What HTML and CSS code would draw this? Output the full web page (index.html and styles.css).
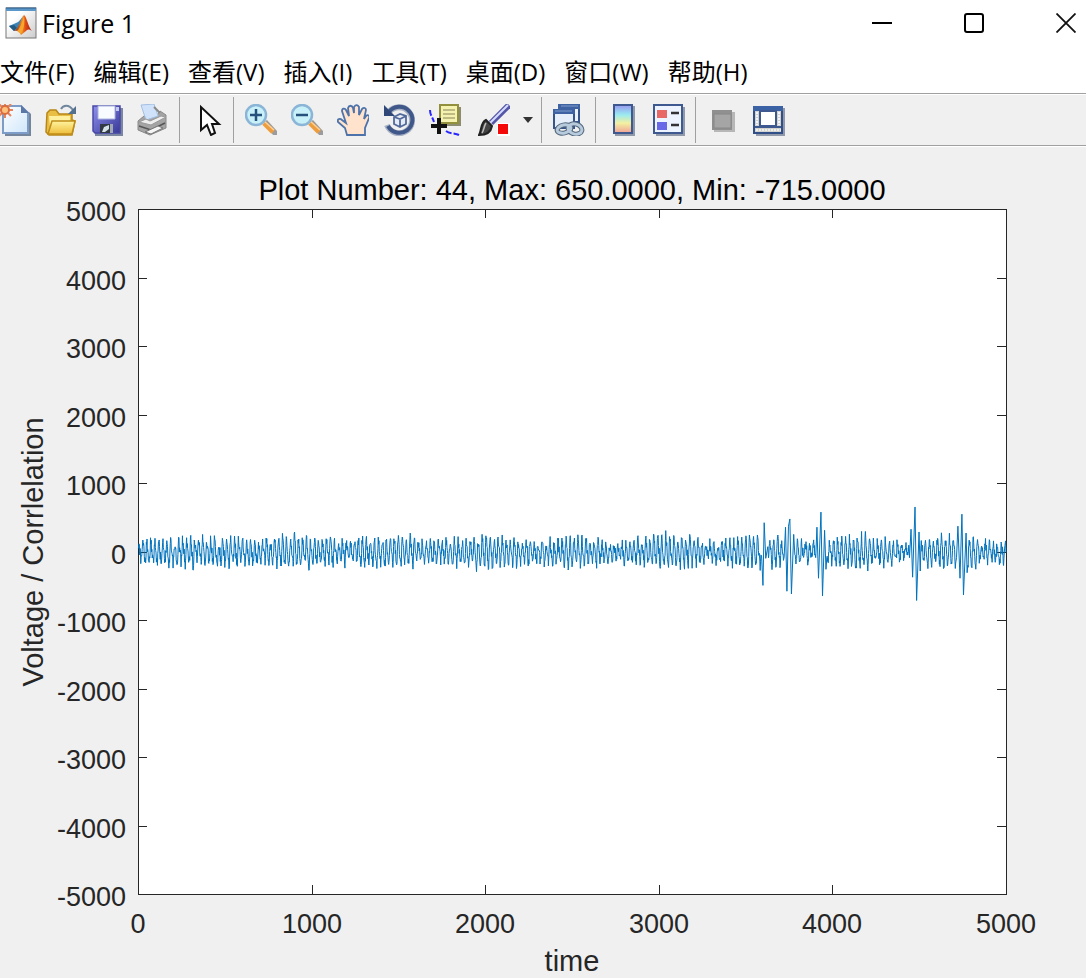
FILE: index.html
```html
<!DOCTYPE html>
<html lang="zh-CN">
<head>
<meta charset="UTF-8">
<meta name="viewport" content="width=device-width, initial-scale=1.0">
<title>Figure 1</title>
<link rel="stylesheet" href="styles.css">
</head>
<body>
<header class="titlebar">
<svg class="app-icon" viewBox="0 0 32 32" aria-hidden="true">
<defs>
<linearGradient id="appBg" x1="0" y1="0" x2="1" y2="1"><stop offset="0.3" stop-color="#ffffff"/><stop offset="1" stop-color="#cccccc"/></linearGradient>
<linearGradient id="flame" x1="0" y1="0" x2="1" y2="0"><stop offset="0" stop-color="#7c1c14"/><stop offset="0.45" stop-color="#f08a24"/><stop offset="0.65" stop-color="#e04a12"/><stop offset="1" stop-color="#a01c10"/></linearGradient>
</defs>
<rect x="1" y="1" width="30" height="30" fill="url(#appBg)" stroke="#777"/>
<path d="M1 1h30v3H1z" fill="#5a96c8"/><path d="M1 1h30" stroke="#2d5f8c"/>
<path d="M4 19l7-3c3-1 5-4 7-7l-3 10-6 5z" fill="#3b83b5"/>
<path d="M4 19l5 5 3-3-3-3z" fill="#245a80"/>
<path d="M9 24c5-2 7-13 10-16 3 2 4 12 8 16-3-2-4-2-6 0l-5 4c-1-3-3-5-7-4z" fill="url(#flame)"/>
<path d="M19 9c-2 5-3 12-7 15l4 3c3-5 4-12 3-18z" fill="#f6a52e"/>
</svg>
<h1>Figure 1</h1>
<div class="window-buttons">
<button aria-label="最小化"><svg viewBox="0 0 20 20"><path d="M0 10h20" stroke="#000" stroke-width="2"/></svg></button>
<button aria-label="最大化"><svg viewBox="0 0 20 20"><rect x="1" y="1" width="18" height="18" rx="2" fill="none" stroke="#000" stroke-width="2"/></svg></button>
<button aria-label="关闭"><svg viewBox="0 0 20 20"><path d="M0.5 0.5l19 19M19.5 0.5l-19 19" stroke="#111" stroke-width="1.8"/></svg></button>
</div>
</header>
<nav class="menubar">
<button>文件(F)</button>
<button>编辑(E)</button>
<button>查看(V)</button>
<button>插入(I)</button>
<button>工具(T)</button>
<button>桌面(D)</button>
<button>窗口(W)</button>
<button>帮助(H)</button>
</nav>
<div class="toolbar-frame">
<div class="toolbar">
<button class="tool" aria-label="新建"><svg viewBox="0 0 32 32">
<defs><linearGradient id="paper" x1="0" y1="0" x2="1" y2="1"><stop offset="0" stop-color="#ffffff"/><stop offset="1" stop-color="#cfe6fb"/></linearGradient></defs>
<path d="M6 6v26h26V10l-2-2z" fill="#74859c"/>
<path d="M4 2h18l7 7v20H4z" fill="url(#paper)" stroke="#7d9cc8" stroke-width="2"/>
<path d="M22 1l8 8h-8z" fill="#5a77a8"/>
<path d="M6-2v16M-2 6h16M0 0l12 12M12 0L0 12" stroke="#e8835a" stroke-width="2"/>
<circle cx="6" cy="6" r="4" fill="#ffc27c" stroke="#dd6d3d" stroke-width="2"/>
</svg></button>
<button class="tool" aria-label="打开"><svg viewBox="0 0 32 32">
<defs><linearGradient id="folder" x1="0" y1="0" x2="0" y2="1"><stop offset="0" stop-color="#fff4a0"/><stop offset="1" stop-color="#eebd3a"/></linearGradient></defs>
<path d="M2 9l3-3h6l3 4h13v6l3 1-3 14H4l-3-3z" fill="#e9be45" stroke="#b88717" stroke-width="1.5"/>
<path d="M4 12h21v5H9l-4 6z" fill="#fff0a0"/>
<path d="M7 17h23l-3 13H3z" fill="url(#folder)" stroke="#c08d18" stroke-width="1.5"/>
<path d="M16 5c2-4 8-5 12 1" fill="none" stroke="#71879e" stroke-width="2"/>
<path d="M31 2v8h-8z" fill="#536f8e"/>
</svg></button>
<button class="tool" aria-label="保存"><svg viewBox="0 0 32 32">
<defs><linearGradient id="disk" x1="0" y1="0" x2="1" y2="1"><stop offset="0" stop-color="#9090ee"/><stop offset="1" stop-color="#383896"/></linearGradient></defs>
<path d="M4 4h28v28H4z" fill="#7b86a0"/>
<path d="M2 2h27v27H4l-2-2z" fill="url(#disk)" stroke="#4848a8" stroke-width="1.5"/>
<path d="M7 2h17v13H7z" fill="#f8fbff" stroke="#a9b2dd"/>
<path d="M25 3h3v4h-3z" fill="#c4c9f2"/>
<path d="M9 20h13v9H9z" fill="#333944"/><path d="M13 23l5-2v4l-4 3h-3z" fill="#d4e2e8"/><path d="M19 20h3v9h-3z" fill="#9fa9b5"/>
</svg></button>
<button class="tool" aria-label="打印"><svg viewBox="0 0 32 32">
<path d="M1 17l6-5 3 3 10-4 3-4 6 4v13l-16 7-12-5z" fill="#a4a4a4" stroke="#888"/>
<path d="M4 1l13-1 4 12-12 4z" fill="#cfe2f9" stroke="#a3bfe2"/>
<path d="M2 18l7-3 4 2 11-5 5 1-15 8z" fill="#eeeeee" stroke="#999"/>
<path d="M2 22l12 4 14-7" fill="none" stroke="#555" stroke-width="1.5"/>
<path d="M8 28l13-6 5 2-12 6z" fill="#f5f5f5" stroke="#777"/>
<path d="M17 3l6 6" stroke="#888" stroke-width="2"/>
</svg></button>
<span class="separator"></span>
<button class="tool" aria-label="编辑绘图"><svg viewBox="0 0 32 32">
<path d="M10 3v23l6-5 4 10 4-2-3-9h7z" fill="#fff" stroke="#111" stroke-width="2"/>
</svg></button>
<span class="separator"></span>
<button class="tool" aria-label="放大"><svg viewBox="0 0 32 32">
<path d="M19 18l3-2 10 11v4h-4z" fill="#777" opacity="0.7"/>
<path d="M19 19l9 9" stroke="#ee9d3e" stroke-width="5"/><path d="M19 17l10 9" stroke="#ffd092" stroke-width="1.5"/>
<circle cx="11" cy="11" r="10" fill="#c8f0f8" stroke="#8bb5d6" stroke-width="2.5"/>
<path d="M5 11h12M11 5v12" stroke="#27517d" stroke-width="2.5"/>
</svg></button>
<button class="tool" aria-label="缩小"><svg viewBox="0 0 32 32">
<path d="M19 18l3-2 10 11v4h-4z" fill="#777" opacity="0.7"/>
<path d="M19 19l9 9" stroke="#ee9d3e" stroke-width="5"/><path d="M19 17l10 9" stroke="#ffd092" stroke-width="1.5"/>
<circle cx="11" cy="11" r="10" fill="#c8f0f8" stroke="#8bb5d6" stroke-width="2.5"/>
<path d="M5 11h12" stroke="#27517d" stroke-width="2.5"/>
</svg></button>
<button class="tool" aria-label="平移"><svg viewBox="0 0 32 32">
<path d="M10 31l-2-7-7-6c-1-3 2-4 4-2l4 3-4-12c0-3 3-3 4-1l3 6-1-8c1-3 4-3 5 0l1 5 0-6c2-3 4-2 5 0l0 8 3-6c2-2 4-1 4 1l-2 9 2-3c2-2 4 0 3 2l-4 10v7z" fill="#ffe3cc" stroke="#4e73ab" stroke-width="1.8"/>
</svg></button>
<button class="tool" aria-label="三维旋转"><svg viewBox="0 0 32 32">
<path d="M6 8a13 13 0 1 1-2 13" fill="none" stroke="#a8b2c4" stroke-width="6"/>
<path d="M6 8a13 13 0 1 1-1 14" fill="none" stroke="#40578a" stroke-width="4"/>
<path d="M1 1v11h11z" fill="#304878"/>
<path d="M11 13l6-3 6 2v8l-6 3-6-3zM11 13l6 2 6-3M17 15v8" fill="#e5ecf8" stroke="#52699b" stroke-width="1.8"/>
</svg></button>
<button class="tool" aria-label="数据游标"><svg viewBox="0 0 32 32">
<path d="M13 3h19v19H13z" fill="#8c8c70"/>
<path d="M11 1h18v18H11z" fill="#f5f2b0" stroke="#92903c" stroke-width="2"/>
<path d="M14 6h12M14 10h12M14 14h12" stroke="#aaa876" stroke-width="1.5"/>
<path d="M1 6c0 5 2 6 4 12M17 27c4 3 9 2 13 4" fill="none" stroke="#2828ff" stroke-width="2" stroke-dasharray="6 2"/>
<path d="M10 14v16M2 22h16" stroke="#111" stroke-width="4"/>
</svg></button>
<button class="tool brush" aria-label="刷亮"><svg viewBox="0 0 32 32">
<path d="M31 1L13 19" stroke="#5555a8" stroke-width="6"/><path d="M30 1L12 19" stroke="#d4dcff" stroke-width="2"/>
<path d="M8 16l6 6c-1 6-6 9-13 9 3-5 1-12 7-15z" fill="#444" stroke="#222" stroke-width="2"/>
<path d="M8 19c-2 3-2 7-4 10" fill="none" stroke="#bbb" stroke-width="1.5"/>
<path d="M19 19h13v13H19z" fill="#fff"/><path d="M20 20h10v10H20z" fill="#f50a0a"/>
</svg></button>
<button class="dropdown" aria-label="刷亮选项"><svg viewBox="0 0 10 6"><path d="M0 0h10L5 6z" fill="#333"/></svg></button>
<span class="separator"></span>
<button class="tool" aria-label="链接绘图"><svg viewBox="0 0 32 32">
<path d="M6 1h20v17H6z" fill="#eef4ff" stroke="#36558d" stroke-width="2"/><path d="M5 0h22v5H5z" fill="#3e62a2"/>
<path d="M1 6h20v18H1z" fill="#e7effb" stroke="#36558d" stroke-width="2"/><path d="M0 5h22v5H0z" fill="#3e62a2"/>
<path d="M2 7h17M8 2h17" stroke="#7f9bcb"/>
<g fill="none" stroke="#53677d" stroke-width="5"><ellipse cx="11" cy="25" rx="7" ry="4" transform="rotate(-12 11 25)"/><ellipse cx="22" cy="25" rx="7" ry="5" transform="rotate(15 22 25)"/></g>
<g fill="none" stroke="#b7cbdc" stroke-width="3"><ellipse cx="11" cy="25" rx="7" ry="4" transform="rotate(-12 11 25)"/><ellipse cx="22" cy="25" rx="7" ry="5" transform="rotate(15 22 25)"/></g>
</svg></button>
<span class="separator"></span>
<button class="tool" aria-label="插入颜色栏"><svg viewBox="0 0 32 32">
<defs><linearGradient id="rainbow" x1="0" y1="0" x2="0" y2="1"><stop offset="0" stop-color="#9898f0"/><stop offset="0.35" stop-color="#9aeaf0"/><stop offset="0.65" stop-color="#f4f0a0"/><stop offset="1" stop-color="#f0a098"/></linearGradient></defs>
<path d="M8 2h20v30H8z" fill="#8f99aa"/>
<path d="M7 1h18v28H7z" fill="url(#rainbow)" stroke="#3d5990" stroke-width="2"/>
</svg></button>
<button class="tool" aria-label="插入图例"><svg viewBox="0 0 32 32">
<path d="M3 3h29v29H3z" fill="#8f99aa"/>
<path d="M1 1h28v28H1z" fill="#edf3ff" stroke="#3d5990" stroke-width="2"/>
<path d="M4 6h10v8H4z" fill="#e86767"/><path d="M4 18h10v8H4z" fill="#6969e8"/>
<path d="M18 9h8M18 21h8" stroke="#333" stroke-width="2.5"/>
</svg></button>
<span class="separator"></span>
<button class="tool" aria-label="隐藏绘图工具"><svg viewBox="0 0 32 32">
<path d="M7 8h21v20H7z" fill="#b7b7b7"/><path d="M5 6h20v20H5z" fill="#909090"/><path d="M7 10h17v14H7z" fill="#a5a5a5" stroke="#888"/>
</svg></button>
<button class="tool" aria-label="显示绘图工具"><svg viewBox="0 0 32 32">
<path d="M3 4h29v28H3z" fill="#8f99aa"/>
<path d="M1 3h28v26H1z" fill="#d3d3cd" stroke="#304f88" stroke-width="2"/>
<path d="M0 2h30v5H0z" fill="#3c62a6"/>
<path d="M7 7h16v15H7z" fill="#fff" stroke="#3d5990" stroke-width="2"/>
<path d="M2 23h26" stroke="#3d5990" stroke-width="2"/>
<path d="M4 8v13M26 8v13" stroke="#f5f5f5" stroke-width="2" stroke-dasharray="2 1"/><path d="M3 26h25" stroke="#eee" stroke-width="2" stroke-dasharray="2 1"/>
</svg></button>
</div>
</div>
<main class="figure">
<svg class="plot" id="plot" viewBox="0 0 1086 832" role="img" aria-label="Voltage / Corrlelation">
<rect class="axes-bg" x="138" y="63" width="868" height="685"/>
<g id="ticks"></g>
<rect class="axes-box" x="138" y="63" width="868" height="685"/>
<polyline class="signal" id="signal"/>
<text class="plot-title" x="572" y="54">Plot Number: 44, Max: 650.0000, Min: -715.0000</text>
<text class="axis-label" x="572" y="825">time</text>
<text class="axis-label" transform="translate(43 406) rotate(-90)">Voltage / Corrlelation</text>
</svg>
</main>
<script src="script.js"></script>
</body>
</html>
```

FILE: styles.css
```css
body { margin: 0; background-color: #f0f0f0; font-family: "Open Sans", "Noto Sans CJK SC", sans-serif; color: #000; }
button { margin: 0; padding: 0; border: none; background: none; color: inherit; font: inherit; }
.titlebar { display: flex; align-items: center; height: 46px; padding-left: 5px; background-color: #fff; }
.titlebar h1 { margin: 0 0 0 5px; font-family: "Open Sans", sans-serif; font-size: 25px; font-weight: normal; }
.app-icon { width: 32px; height: 32px; }
.window-buttons { display: flex; margin-left: auto; margin-right: -26px; }
.window-buttons button { width: 92px; height: 46px; }
.window-buttons svg { display: block; width: 20px; height: 20px; margin: 0 auto; }
.menubar { display: flex; gap: 19px; height: 47px; background-color: #fff; }
.menubar button { padding-top: 1px; font-size: 24px; white-space: nowrap; }
.toolbar-frame { overflow: hidden; border-top: 1px solid #a0a0a0; border-bottom: 1px solid #a0a0a0; box-shadow: inset 0 1px 0 #fff, 0 1px 0 #fff; }
.toolbar { display: flex; align-items: center; height: 51px; margin-left: -8px; }
.tool { flex: none; width: 46px; height: 46px; }
.tool svg { display: block; width: 32px; height: 32px; margin: 0 auto; }
.brush { margin-left: 3px; }
.dropdown { flex: none; width: 21px; height: 46px; }
.dropdown svg { display: block; width: 10px; height: 6px; margin: 0 auto; }
.separator { flex: none; width: 1px; height: 46px; margin: 0 4px 0 3px; background-color: #a0a0a0; }
.plot { display: block; width: 100%; height: auto; }
.axes-bg { fill: #fff; }
.axes-box { fill: none; stroke: #262626; shape-rendering: crispEdges; }
.tick { stroke: #262626; shape-rendering: crispEdges; }
.signal { fill: none; stroke: #0072bd; stroke-width: 1; stroke-linejoin: bevel; }
.plot text { font-family: "Liberation Sans", Arial, sans-serif; text-anchor: middle; }
.plot .tick-label { font-size: 27px; fill: #262626; }
.plot .y-label { text-anchor: end; }
.plot .plot-title { font-size: 29px; fill: #000; }
.plot .axis-label { font-size: 29px; fill: #262626; }
```

FILE: script.js
```js
var SVG = "http://www.w3.org/2000/svg";
var box = { left: 138, top: 63, width: 868, height: 685 };
var ticks = document.getElementById("ticks");

function xPos(t) { return box.left + t / 5000 * box.width; }
function yPos(v) { return box.top + (5000 - v) / 10000 * box.height; }

function addLine(x1, y1, x2, y2) {
  var line = document.createElementNS(SVG, "line");
  line.setAttribute("class", "tick");
  line.setAttribute("x1", x1);
  line.setAttribute("y1", y1);
  line.setAttribute("x2", x2);
  line.setAttribute("y2", y2);
  ticks.appendChild(line);
}

function addLabel(x, y, text, className) {
  var label = document.createElementNS(SVG, "text");
  label.setAttribute("class", className);
  label.setAttribute("x", x);
  label.setAttribute("y", y);
  label.textContent = text;
  ticks.appendChild(label);
}

var right = box.left + box.width;
var bottom = box.top + box.height;

for (var t = 0; t <= 5000; t += 1000) {
  var x = Math.round(xPos(t));
  addLine(x, box.top, x, box.top + 9);
  addLine(x, bottom, x, bottom - 9);
  addLabel(x, bottom + 39, t, "tick-label");
}
for (var v = -5000; v <= 5000; v += 1000) {
  var y = Math.round(yPos(v));
  addLine(box.left, y, box.left + 9, y);
  addLine(right, y, right - 9, y);
  addLabel(126, y + 12, v, "tick-label y-label");
}

// ripple amplitude: slow beat with a steady floor
function amplitude(t) {
  return 178 + 38 * Math.cos((t - 420) / 530 * 2 * Math.PI) + 15 * Math.sin(t / 91);
}

// time, value
var spikes = [
  [3592, -60], [3600, -495], [3607, 420], [3616, -100], [3628, 70],
  [3722, -80], [3730, 355], [3738, -580], [3747, 370], [3755, 475], [3764, -620], [3777, 250],
  [3904, -90], [3911, 355], [3920, -390], [3934, 575], [3943, -650], [3955, 310], [3963, -260],
  [4444, -90], [4453, 325], [4462, -375], [4476, 650], [4485, -715], [4499, 285], [4506, -285],
  [4715, -90], [4723, 370], [4735, -390], [4746, 545], [4755, -635], [4770, 270], [4776, -310]
];

var seed = 44;
function random() {
  seed = (seed * 16807) % 2147483647;
  return seed / 2147483647;
}

var points = [];
var gain = 1;
for (var s = 0; s <= 5000; s += 2) {
  // each 23 sample cycle gets its own gain
  if (s % 23 < 2) {
    gain = 0.8 + random() * 0.35;
  }
  var inSpike = (s > 3588 && s < 3632) || (s > 3718 && s < 3781) || (s > 3900 && s < 3967) ||
    (s > 4440 && s < 4510) || (s > 4711 && s < 4780);
  if (!inSpike) {
    var phase = s / 23 * 2 * Math.PI;
    var value = amplitude(s) * gain * (0.9 * Math.sin(phase) + 0.2 * Math.sin(phase * 2)) + (random() - 0.5) * 170 - 8;
    points.push([s, value]);
  }
}
points = points.concat(spikes).sort(function(a, b) { return a[0] - b[0]; });

document.getElementById("signal").setAttribute("points", points.map(function(p) {
  return xPos(p[0]).toFixed(2) + "," + yPos(p[1]).toFixed(2);
}).join(" "));
```
